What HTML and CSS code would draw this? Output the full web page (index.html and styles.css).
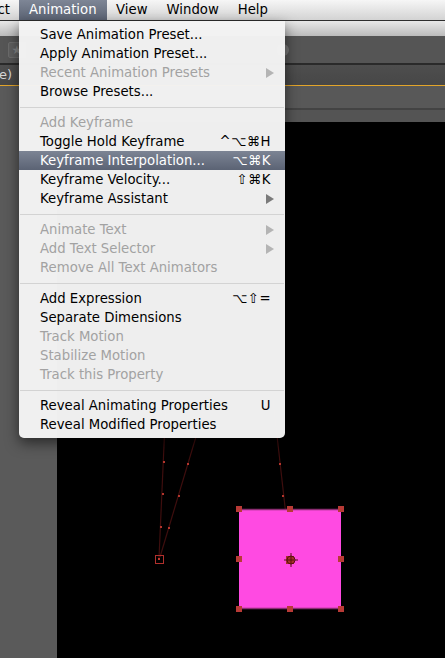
FILE: index.html
```html
<!DOCTYPE html>
<html>
<head>
<meta charset="utf-8">
<link rel="stylesheet" href="styles.css">
</head>
<body>
<div class="app">
  <div class="menubar">
    <span class="mb-item mb-first">ct</span>
    <span class="mb-item mb-active">Animation</span>
    <span class="mb-item">View</span>
    <span class="mb-item">Window</span>
    <span class="mb-item">Help</span>
  </div>
  <div class="toolbar"></div>
  <div class="panelbar">
    <span class="star-btn">★</span>
    <span class="flex-spacer"></span>
    <span class="circle-btn"></span>
  </div>
  <div class="tabrow"><span class="tab-text">e)</span></div>
  <div class="main">
    <div class="leftpanel"></div>
    <div class="comp">
      <div class="comp-header"></div>
      <div class="comp-sub"></div>
      <div class="canvas">
        <svg class="scene" viewBox="57 122 388 536" width="388" height="536">
          <g class="path-line">
            <line x1="166" y1="400" x2="159" y2="558"/>
            <line x1="207" y1="400" x2="160" y2="557"/>
            <line x1="273" y1="400" x2="291" y2="560"/>
          </g>
          <g class="path-dot">
            <rect x="163" y="461" width="2" height="2"/>
            <rect x="162" y="493" width="2" height="2"/>
            <rect x="160" y="526" width="2" height="2"/>
            <rect x="187" y="463" width="2" height="2"/>
            <rect x="178" y="495" width="2" height="2"/>
            <rect x="168" y="527" width="2" height="2"/>
            <rect x="279" y="463" width="2" height="2"/>
            <rect x="282" y="495" width="2" height="2"/>
            <rect x="286" y="527" width="2" height="2"/>
          </g>
          <rect class="null-box" x="155.5" y="555.5" width="8" height="8"/>
          <rect class="null-dot" x="158" y="558" width="2" height="2"/>
          <rect class="layer" x="239" y="509" width="102" height="100"/>
          <line class="layer-edge" x1="239" y1="509.5" x2="341" y2="509.5"/>
          <line class="layer-edge" x1="239" y1="608.5" x2="341" y2="608.5"/>
          <g class="handle">
            <rect x="236" y="506" width="6" height="6"/>
            <rect x="287" y="506" width="6" height="6"/>
            <rect x="338" y="506" width="6" height="6"/>
            <rect x="236" y="556" width="6" height="6"/>
            <rect x="338" y="556" width="6" height="6"/>
            <rect x="236" y="606" width="6" height="6"/>
            <rect x="287" y="606" width="6" height="6"/>
            <rect x="338" y="606" width="6" height="6"/>
          </g>
          <rect class="anchor-sq" x="286" y="556" width="8" height="8"/>
          <circle class="anchor" cx="291" cy="560" r="4"/>
          <line class="anchor" x1="284" y1="560" x2="298" y2="560"/>
          <line class="anchor" x1="291" y1="553" x2="291" y2="567"/>
        </svg>
      </div>
    </div>
  </div>

  <div class="menu">
    <div class="mi">Save Animation Preset...</div>
    <div class="mi">Apply Animation Preset...</div>
    <div class="mi dis"><span>Recent Animation Presets</span><span class="arrow"></span></div>
    <div class="mi">Browse Presets...</div>
    <div class="sep"></div>
    <div class="mi dis">Add Keyframe</div>
    <div class="mi"><span>Toggle Hold Keyframe</span><span class="sc">^⌥⌘H</span></div>
    <div class="mi hl"><span>Keyframe Interpolation...</span><span class="sc">⌥⌘K</span></div>
    <div class="mi"><span>Keyframe Velocity...</span><span class="sc">⇧⌘K</span></div>
    <div class="mi"><span>Keyframe Assistant</span><span class="arrow"></span></div>
    <div class="sep"></div>
    <div class="mi dis"><span>Animate Text</span><span class="arrow"></span></div>
    <div class="mi dis"><span>Add Text Selector</span><span class="arrow"></span></div>
    <div class="mi dis">Remove All Text Animators</div>
    <div class="sep"></div>
    <div class="mi"><span>Add Expression</span><span class="sc">⌥⇧=</span></div>
    <div class="mi">Separate Dimensions</div>
    <div class="mi dis">Track Motion</div>
    <div class="mi dis">Stabilize Motion</div>
    <div class="mi dis">Track this Property</div>
    <div class="sep"></div>
    <div class="mi"><span>Reveal Animating Properties</span><span class="sc">U</span></div>
    <div class="mi">Reveal Modified Properties</div>
  </div>
</div>
</body>
</html>
```

FILE: styles.css
```css
* { box-sizing: border-box; }
html, body { margin: 0; padding: 0; }
body {
  width: 445px;
  height: 658px;
  overflow: hidden;
  background: #5a5a5a;
  font-family: "DejaVu Sans", "Liberation Sans", sans-serif;
  font-size: 13.25px;
}
.app {
  position: relative;
  width: 445px;
  height: 658px;
  display: flex;
  flex-direction: column;
}
.menubar {
  height: 21px;
  flex: none;
  display: flex;
  background: linear-gradient(#f6f6f6, #d3d3d3);
  border-bottom: 1px solid #2e2e2e;
  line-height: 20px;
  color: #000;
  white-space: nowrap;
}
.mb-item { padding: 0 9.5px; }
.mb-first { margin-left: -12px; }
.mb-active {
  background: linear-gradient(#7e8696, #5c6474);
  color: #fff;
  padding: 0 10px 0 9.5px;
}
.toolbar {
  height: 15px;
  flex: none;
  background: linear-gradient(#e8e8e8, #bcbcbc);
}
.panelbar {
  height: 29px;
  flex: none;
  background: #555555;
  border-bottom: 2px solid #2a2a2a;
  display: flex;
  align-items: center;
  padding: 0 0 0 8px;
}
.star-btn {
  width: 18px;
  height: 16px;
  border: 1px solid #6c6c6c;
  border-radius: 2px;
  background: #5f5f5f;
  color: #858585;
  font-size: 12px;
  line-height: 14px;
  text-align: center;
}
.flex-spacer { flex: 1; }
.circle-btn {
  width: 12px;
  height: 12px;
  border-radius: 50%;
  background: #777;
  margin-right: 156px;
}
.tabrow {
  height: 21px;
  flex: none;
  background: linear-gradient(#4e4e4e, #474747);
  border-bottom: 1px solid #e3a52a;
  color: #d6d6d6;
  font-size: 13px;
  line-height: 20px;
  overflow: hidden;
}
.tab-text { margin-left: -1px; }
.main {
  flex: 1;
  display: flex;
  min-height: 0;
}
.leftpanel {
  width: 57px;
  flex: none;
  background: #5a5a5a;
}
.comp {
  flex: 1;
  display: flex;
  flex-direction: column;
}
.comp-header {
  height: 24px;
  flex: none;
  background: #585858;
  border-bottom: 2px solid #434343;
}
.comp-sub {
  height: 12px;
  flex: none;
  background: #545454;
}
.canvas {
  flex: 1;
  background: #000;
  overflow: hidden;
}
.scene { display: block; }
.path-line line { stroke: #3e0e0e; stroke-width: 1.2; }
.path-dot rect { fill: #b3352c; }
.null-box { fill: none; stroke: #b0302c; stroke-width: 1; }
.null-dot { fill: #c0392f; }
.layer { fill: #ff4ae2; }
.layer-edge { stroke: #8c2c72; stroke-width: 1.5; }
.handle rect { fill: #b83a36; }
.anchor-sq { fill: #a8302c; }
.anchor { fill: none; stroke: #5a1010; stroke-width: 1; }

.menu {
  position: absolute;
  left: 19px;
  top: 21px;
  width: 266px;
  height: 417px;
  padding: 4px 0;
  background: rgba(243, 243, 243, 0.98);
  border-radius: 0 0 5px 5px;
  box-shadow: 0 5px 14px rgba(0, 0, 0, 0.55);
  color: #000;
  white-space: nowrap;
}
.mi {
  height: 19px;
  line-height: 19px;
  padding: 0 14px 0 21px;
  display: flex;
  justify-content: space-between;
  align-items: center;
}
.mi.dis { color: #a2a2a2; }
.mi.hl {
  background: linear-gradient(#7c8494, #5b6374);
  color: #fff;
}
.sc { letter-spacing: 0.5px; }
.arrow {
  width: 0;
  height: 0;
  border-left: 8px solid #7a7a7a;
  border-top: 5px solid transparent;
  border-bottom: 5px solid transparent;
  margin-right: -3px;
}
.mi.dis .arrow { border-left-color: #b4b4b4; }
.sep {
  height: 12px;
  display: flex;
  align-items: center;
  padding: 0 1px;
}
.sep::before {
  content: "";
  flex: 1;
  height: 1px;
  background: #d3d3d3;
}
```
